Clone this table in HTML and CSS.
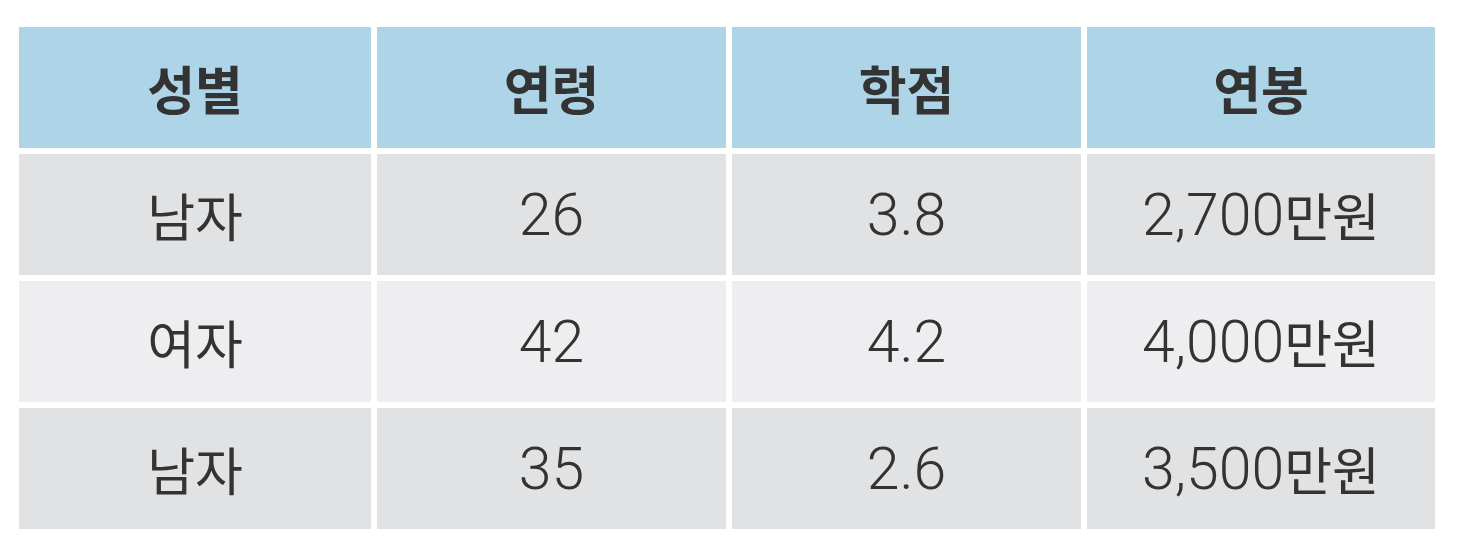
FILE: index.html
```html
<!DOCTYPE html>
<html lang="ko">
<head>
<meta charset="utf-8">
<link rel="stylesheet" href="styles.css">
</head>
<body>
<div class="table">
  <div class="cell head"><span class="ko">성별</span></div>
  <div class="cell head"><span class="ko">연령</span></div>
  <div class="cell head"><span class="ko">학점</span></div>
  <div class="cell head"><span class="ko">연봉</span></div>

  <div class="cell odd"><span class="ko">남자</span></div>
  <div class="cell odd">26</div>
  <div class="cell odd">3.8</div>
  <div class="cell odd">2,700<span class="ko">만원</span></div>

  <div class="cell even"><span class="ko">여자</span></div>
  <div class="cell even">42</div>
  <div class="cell even">4.2</div>
  <div class="cell even">4,000<span class="ko">만원</span></div>

  <div class="cell odd"><span class="ko">남자</span></div>
  <div class="cell odd">35</div>
  <div class="cell odd">2.6</div>
  <div class="cell odd">3,500<span class="ko">만원</span></div>
</div>
</body>
</html>
```
FILE: styles.css
```css
html, body {
  margin: 0;
  padding: 0;
  background: #ffffff;
}
body {
  padding: 27px 0 0 19px;
  font-family: "Roboto", "Noto Sans CJK KR", sans-serif;
  color: #333333;
}
.table {
  display: grid;
  grid-template-columns: 352px 349px 349px 348px;
  grid-auto-rows: 121px;
  column-gap: 6px;
  row-gap: 6px;
  width: 1416px;
}
.cell {
  display: flex;
  align-items: center;
  justify-content: center;
  font-size: 59px;
  font-weight: 300;
  line-height: 1;
}
.ko {
  font-family: "Noto Sans CJK KR", sans-serif;
  font-size: 52px;
  font-weight: 400;
}
.head {
  background: #aed4e7;
}
.head .ko {
  font-weight: 700;
}
.odd {
  background: #e1e2e4;
}
.even {
  background: #eeeef0;
}
```
